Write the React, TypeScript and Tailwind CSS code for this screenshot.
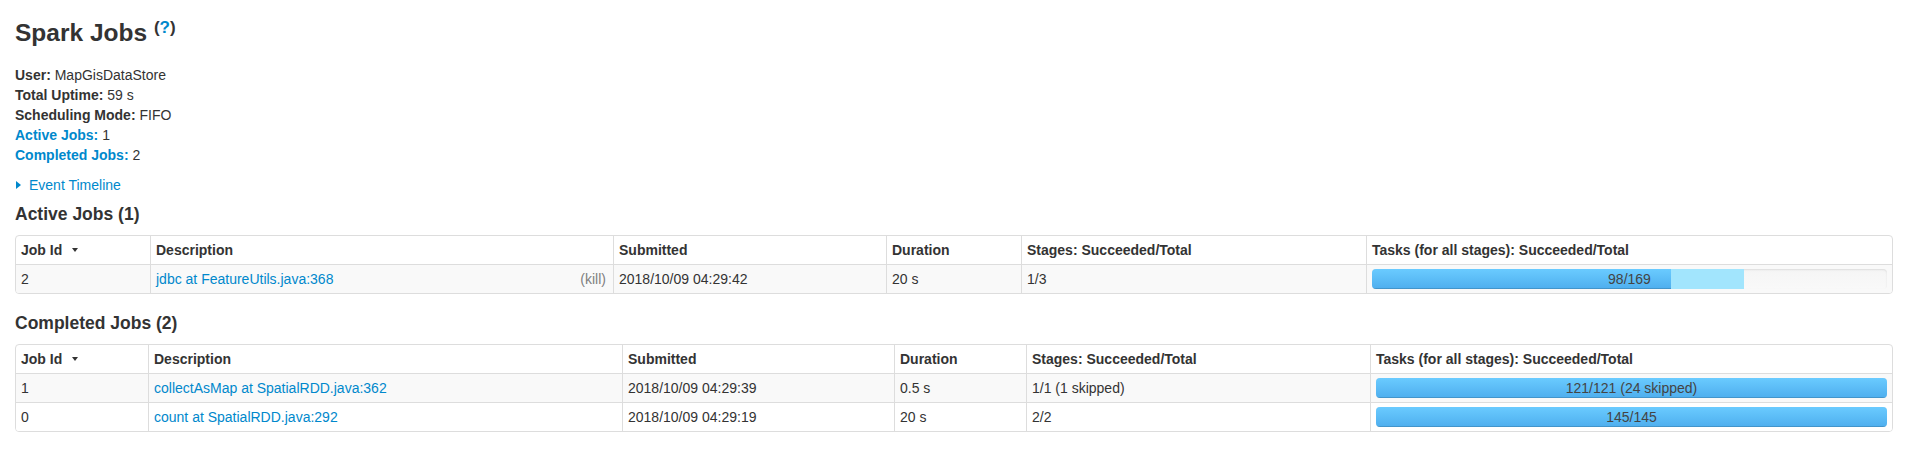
type Job = {
  id: string;
  desc: string;
  submitted: string;
  duration: string;
  stages: string;
  done: number;
  running: number;
  total: number;
  label: string;
  kill?: boolean;
};

const activeJobs: Job[] = [
  {
    id: "2",
    desc: "jdbc at FeatureUtils.java:368",
    submitted: "2018/10/09 04:29:42",
    duration: "20 s",
    stages: "1/3",
    done: 98,
    running: 24,
    total: 169,
    label: "98/169",
    kill: true,
  },
];

const completedJobs: Job[] = [
  {
    id: "1",
    desc: "collectAsMap at SpatialRDD.java:362",
    submitted: "2018/10/09 04:29:39",
    duration: "0.5 s",
    stages: "1/1 (1 skipped)",
    done: 121,
    running: 0,
    total: 121,
    label: "121/121 (24 skipped)",
  },
  {
    id: "0",
    desc: "count at SpatialRDD.java:292",
    submitted: "2018/10/09 04:29:19",
    duration: "20 s",
    stages: "2/2",
    done: 145,
    running: 0,
    total: 145,
    label: "145/145",
  },
];

const headers = [
  "Job Id",
  "Description",
  "Submitted",
  "Duration",
  "Stages: Succeeded/Total",
  "Tasks (for all stages): Succeeded/Total",
];

const activeCols = ["w-[134px]", "w-[463px]", "w-[273px]", "w-[135px]", "w-[345px]", "w-[526px]"];
const completedCols = ["w-[132px]", "w-[474px]", "w-[272px]", "w-[132px]", "w-[344px]", "w-[522px]"];

const ProgressBar = ({ job }: { job: Job }) => (
  <div className="relative flex h-5 overflow-hidden rounded-[4px] bg-[linear-gradient(to_bottom,#f5f5f5,#f9f9f9)] shadow-[inset_0_1px_2px_rgba(0,0,0,0.1)]">
    <div
      className="h-full bg-[linear-gradient(to_bottom,#6acbff,#4eaeee)] shadow-[inset_0_-1px_0_rgba(0,0,0,0.15)]"
      style={{ width: `${(job.done / job.total) * 100}%` }}
    />
    {job.running > 0 && (
      <div className="h-full bg-[#a2e5fd]" style={{ width: `${(job.running / job.total) * 100}%` }} />
    )}
    <span className="absolute inset-0 text-center leading-5 text-[#444]">{job.label}</span>
  </div>
);

const JobsTable = ({ jobs, cols }: { jobs: Job[]; cols: string[] }) => (
  <div className="overflow-hidden rounded-[4px] border border-[#ddd]">
    <table className="w-full table-fixed border-separate border-spacing-0">
      <thead>
        <tr>
          {headers.map((h, i) => (
            <th
              key={h}
              className={`${cols[i]} ${i > 0 ? "border-l border-[#ddd]" : ""} px-[5px] py-1 text-left font-bold leading-5`}
            >
              {i === 0 ? (
                <span className="flex items-center">
                  {h}
                  <span className="ml-[10px] inline-block h-0 w-0 border-x-[3px] border-t-[4px] border-x-transparent border-t-[#333]" />
                </span>
              ) : (
                h
              )}
            </th>
          ))}
        </tr>
      </thead>
      <tbody>
        {jobs.map((job, r) => (
          <tr key={job.id} className={r % 2 === 0 ? "bg-[#f9f9f9]" : "bg-white"}>
            <td className="border-t border-[#ddd] px-[5px] py-1 leading-5">{job.id}</td>
            <td className="border-l border-t border-[#ddd] px-[5px] py-1 leading-5">
              <div className="flex justify-between">
                <a className="text-[#0088cc]">{job.desc}</a>
                {job.kill && <span className="mr-[2px] text-[#808080]">(kill)</span>}
              </div>
            </td>
            <td className="border-l border-t border-[#ddd] px-[5px] py-1 leading-5">{job.submitted}</td>
            <td className="border-l border-t border-[#ddd] px-[5px] py-1 leading-5">{job.duration}</td>
            <td className="border-l border-t border-[#ddd] px-[5px] py-1 leading-5">{job.stages}</td>
            <td className="border-l border-t border-[#ddd] px-[5px] py-1 leading-5">
              <ProgressBar job={job} />
            </td>
          </tr>
        ))}
      </tbody>
    </table>
  </div>
);

const App = () => {
  return (
    <div className="min-h-[454px] bg-white pl-[15px] pr-[12px] pt-[13px] font-['Liberation_Sans',Arial,sans-serif] text-[14px] text-[#333]">
      <h3 className="text-[24.5px] font-bold leading-[40px]">
        Spark Jobs{" "}
        <sup className="text-[17px] font-bold">
          (<a className="text-[#0088cc]">?</a>)
        </sup>
      </h3>

      <ul className="mt-[12px] leading-5">
        <li>
          <strong>User:</strong> MapGisDataStore
        </li>
        <li>
          <strong>Total Uptime:</strong> 59 s
        </li>
        <li>
          <strong>Scheduling Mode: </strong>FIFO
        </li>
        <li>
          <a className="font-bold text-[#0088cc]">Active Jobs:</a> 1
        </li>
        <li>
          <a className="font-bold text-[#0088cc]">Completed Jobs:</a> 2
        </li>
      </ul>

      <div className="mt-[10px] flex items-center leading-5">
        <span className="ml-px inline-block h-0 w-0 border-y-[4px] border-l-[5px] border-y-transparent border-l-[#0088cc]" />
        <a className="ml-[8px] text-[#0088cc]">Event Timeline</a>
      </div>

      <h4 className="mt-[9px] text-[17.5px] font-bold leading-5">Active Jobs (1)</h4>
      <div className="mt-[11px]">
        <JobsTable jobs={activeJobs} cols={activeCols} />
      </div>

      <h4 className="mt-[19px] text-[17.5px] font-bold leading-5">Completed Jobs (2)</h4>
      <div className="mt-[11px]">
        <JobsTable jobs={completedJobs} cols={completedCols} />
      </div>
    </div>
  );
};

export default App;
